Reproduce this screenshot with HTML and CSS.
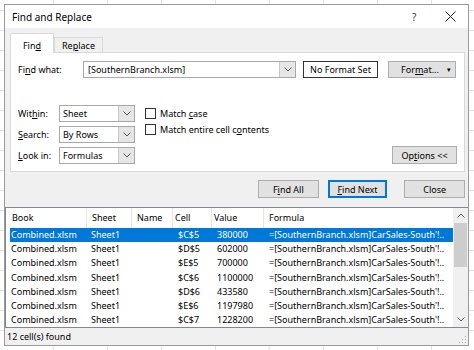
FILE: index.html
```html
<!DOCTYPE html>
<html lang="en">
<head>
	<meta charset="utf-8">
	<title>Find and Replace</title>
	<link rel="stylesheet" href="styles.css">
</head>
<body>
	<div class="dialog">
		<div class="titlebar">
			<span class="title">Find and Replace</span>
			<span class="help">?</span>
			<span class="close-x">
				<svg width="11" height="11" viewBox="0 0 11 11"><path d="M0.5 0.5 L10.5 10.5 M10.5 0.5 L0.5 10.5" stroke="#222" stroke-width="1" fill="none"/></svg>
			</span>
		</div>

		<div class="main">
			<div class="tabs">
				<div class="tab active"><span>Fin<u>d</u></span></div>
				<div class="tab"><span>Re<u>p</u>lace</span></div>
			</div>

			<div class="panel">
				<div class="find-row">
					<span class="find-label">Fi<u>n</u>d what:</span>
					<div class="combo">
						<span class="combo-text">[SouthernBranch.xlsm]</span>
						<span class="drop">
							<svg width="8" height="5" viewBox="0 0 8 5"><path d="M0.5 0.5 L4 4 L7.5 0.5" stroke="#555" fill="none"/></svg>
						</span>
					</div>
					<div class="no-format">No Format Set</div>
					<div class="btn format-btn"><span>For<u>m</u>at...</span><span class="caret">&#9662;</span></div>
				</div>

				<div class="opts">
					<div class="selects">
						<div class="sel-row">
							<span class="label">Wit<u>h</u>in:</span>
							<div class="select">
								<span class="select-text">Sheet</span>
								<span class="drop">
									<svg width="8" height="5" viewBox="0 0 8 5"><path d="M0.5 0.5 L4 4 L7.5 0.5" stroke="#555" fill="none"/></svg>
								</span>
							</div>
						</div>
						<div class="sel-row">
							<span class="label"><u>S</u>earch:</span>
							<div class="select">
								<span class="select-text">By Rows</span>
								<span class="drop">
									<svg width="8" height="5" viewBox="0 0 8 5"><path d="M0.5 0.5 L4 4 L7.5 0.5" stroke="#555" fill="none"/></svg>
								</span>
							</div>
						</div>
						<div class="sel-row">
							<span class="label"><u>L</u>ook in:</span>
							<div class="select">
								<span class="select-text">Formulas</span>
								<span class="drop">
									<svg width="8" height="5" viewBox="0 0 8 5"><path d="M0.5 0.5 L4 4 L7.5 0.5" stroke="#555" fill="none"/></svg>
								</span>
							</div>
						</div>
					</div>

					<div class="checks">
						<div class="check-row"><span class="box"></span><span>Match <u>c</u>ase</span></div>
						<div class="check-row"><span class="box"></span><span>Match entire cell c<u>o</u>ntents</span></div>
					</div>

					<div class="btn options-btn"><span>Op<u>t</u>ions &lt;&lt;</span></div>
				</div>
			</div>

			<div class="actions">
				<div class="btn act"><span>F<u>i</u>nd All</span></div>
				<div class="btn act default"><span><u>F</u>ind Next</span></div>
				<div class="btn act close-btn">Close</div>
			</div>
		</div>

		<div class="results">
			<div class="table">
				<div class="grid head">
					<span class="c1">Book</span>
					<span class="c2">Sheet</span>
					<span class="c3">Name</span>
					<span class="c4">Cell</span>
					<span class="c5">Value</span>
					<span class="c6">Formula</span>
				</div>
				<div class="grid row selected">
					<span class="c1">Combined.xlsm</span><span class="c2">Sheet1</span><span class="c3"></span><span class="c4">$C$5</span><span class="c5">380000</span><span class="c6">=[SouthernBranch.xlsm]CarSales-South'!..</span>
				</div>
				<div class="grid row">
					<span class="c1">Combined.xlsm</span><span class="c2">Sheet1</span><span class="c3"></span><span class="c4">$D$5</span><span class="c5">602000</span><span class="c6">=[SouthernBranch.xlsm]CarSales-South'!..</span>
				</div>
				<div class="grid row">
					<span class="c1">Combined.xlsm</span><span class="c2">Sheet1</span><span class="c3"></span><span class="c4">$E$5</span><span class="c5">700000</span><span class="c6">=[SouthernBranch.xlsm]CarSales-South'!..</span>
				</div>
				<div class="grid row">
					<span class="c1">Combined.xlsm</span><span class="c2">Sheet1</span><span class="c3"></span><span class="c4">$C$6</span><span class="c5">1100000</span><span class="c6">=[SouthernBranch.xlsm]CarSales-South'!..</span>
				</div>
				<div class="grid row">
					<span class="c1">Combined.xlsm</span><span class="c2">Sheet1</span><span class="c3"></span><span class="c4">$D$6</span><span class="c5">433580</span><span class="c6">=[SouthernBranch.xlsm]CarSales-South'!..</span>
				</div>
				<div class="grid row">
					<span class="c1">Combined.xlsm</span><span class="c2">Sheet1</span><span class="c3"></span><span class="c4">$E$6</span><span class="c5">1197980</span><span class="c6">=[SouthernBranch.xlsm]CarSales-South'!..</span>
				</div>
				<div class="grid row">
					<span class="c1">Combined.xlsm</span><span class="c2">Sheet1</span><span class="c3"></span><span class="c4">$C$7</span><span class="c5">1228200</span><span class="c6">=[SouthernBranch.xlsm]CarSales-South'!..</span>
				</div>
			</div>
			<div class="scrollbar">
				<span class="arrow">
					<svg width="8" height="5" viewBox="0 0 8 5"><path d="M0.5 4.5 L4 1 L7.5 4.5" stroke="#555" fill="none"/></svg>
				</span>
				<div class="track"><div class="thumb"></div></div>
				<span class="arrow">
					<svg width="8" height="5" viewBox="0 0 8 5"><path d="M0.5 0.5 L4 4 L7.5 0.5" stroke="#555" fill="none"/></svg>
				</span>
			</div>
		</div>

		<div class="status">
			<span>12 cell(s) found</span>
			<svg class="grip" width="8" height="8" viewBox="0 0 8 8">
				<rect x="6" y="0" width="1" height="1" fill="#aaa"/>
				<rect x="3" y="3" width="1" height="1" fill="#aaa"/>
				<rect x="6" y="3" width="1" height="1" fill="#aaa"/>
				<rect x="0" y="6" width="1" height="1" fill="#aaa"/>
				<rect x="3" y="6" width="1" height="1" fill="#aaa"/>
				<rect x="6" y="6" width="1" height="1" fill="#aaa"/>
			</svg>
		</div>
	</div>
</body>
</html>
```

FILE: styles.css
```css
html {
	height: 100%;
}

body {
	margin: 0;
	padding: 0;
	width: 474px;
	height: 350px;
	overflow: hidden;
	background-color: #ffffff;
	background-image:
		linear-gradient(to right, #e2e2e2 1px, transparent 1px),
		linear-gradient(to bottom, #e2e2e2 1px, transparent 1px);
	background-size: 54px 20px;
	background-position: -1px 10px;
	color: #000000;
	font-family: "Noto Sans", "Open Sans", sans-serif;
	font-size: 9px;
	white-space: nowrap;
}

u {
	text-decoration: underline;
	text-underline-offset: 1px;
}

.dialog {
	margin: 4px 0 0 4px;
	width: 463px;
	height: 340px;
	border: 1px solid #9a9a9a;
	background: #f0f0f0;
	display: flex;
	flex-direction: column;
}

.titlebar {
	height: 23px;
	background: #ffffff;
	display: flex;
	align-items: center;
	padding-left: 7px;
	font-size: 10px;
}

.title {
	flex: 1;
}

.help {
	width: 10px;
	margin-right: 23px;
	color: #333;
}

.close-x {
	display: flex;
	margin-right: 12px;
}

.main {
	padding: 5px 3px 0 5px;
}

.tabs {
	display: flex;
	align-items: flex-end;
	height: 19px;
}

.tab {
	height: 15px;
	padding: 0 7px 0 7px;
	border: 1px solid #d9d9d9;
	border-bottom: none;
	background: #f0f0f0;
	display: flex;
	align-items: center;
	box-sizing: border-box;
}

.tab.active {
	height: 20px;
	width: 44px;
	justify-content: center;
	background: #ffffff;
	margin-bottom: -1px;
	position: relative;
	z-index: 1;
	padding-top: 4px;
}

.panel {
	background: #ffffff;
	border: 1px solid #d9d9d9;
	padding: 8px 7px 0 7px;
	box-sizing: border-box;
	height: 120px;
}

.find-row {
	display: flex;
	align-items: center;
	height: 17px;
}

.find-label {
	width: 65px;
	flex-shrink: 0;
}

.combo {
	width: 213px;
	height: 17px;
	border: 1px solid #a8a8a8;
	box-sizing: border-box;
	display: flex;
	align-items: center;
}

.combo-text {
	flex: 1;
	padding-left: 4px;
}

.drop {
	width: 15px;
	height: 15px;
	background: #e6e6e6;
	border-left: 1px solid #c8c8c8;
	display: flex;
	align-items: center;
	justify-content: center;
}

.no-format {
	margin-left: 7px;
	width: 75px;
	height: 17px;
	border: 1px solid #333;
	box-sizing: border-box;
	display: flex;
	align-items: center;
	justify-content: center;
}

.btn {
	height: 18px;
	border: 1px solid #adadad;
	background: #e1e1e1;
	box-sizing: border-box;
	display: flex;
	align-items: center;
	justify-content: center;
}

.format-btn {
	margin-left: 10px;
	width: 68px;
	height: 17px;
	padding-left: 8px;
}

.caret {
	margin-left: 8px;
	font-size: 7px;
}

.opts {
	display: flex;
	margin-top: 27px;
}

.selects {
	display: flex;
	flex-direction: column;
	gap: 4px;
}

.sel-row {
	display: flex;
	align-items: center;
	height: 17px;
}

.label {
	width: 41px;
}

.select {
	width: 76px;
	height: 17px;
	border: 1px solid #a8a8a8;
	box-sizing: border-box;
	display: flex;
	align-items: center;
}

.select-text {
	flex: 1;
	padding-left: 3px;
}

.checks {
	margin-left: 10px;
	display: flex;
	flex-direction: column;
}

.check-row {
	display: flex;
	align-items: center;
	height: 16px;
}

.box {
	width: 11px;
	height: 11px;
	border: 1px solid #333;
	box-sizing: border-box;
	background: #ffffff;
	margin-right: 4px;
}

.options-btn {
	margin-left: auto;
	align-self: flex-end;
	width: 65px;
}

.actions {
	display: flex;
	margin-top: 8px;
	padding-left: 248px;
}

.act {
	width: 62px;
}

.default {
	margin-left: 9px;
	width: 61px;
	border: 1px solid #0078d7;
	box-shadow: inset 0 0 0 1px #0078d7;
}

.close-btn {
	margin-left: 17px;
}

.results {
	margin-top: 9px;
	height: 121px;
	border: 1px solid #828790;
	border-right: none;
	box-sizing: border-box;
	background: #ffffff;
	display: flex;
}

.table {
	flex: 1;
	padding-left: 4px;
	overflow: hidden;
}

.grid {
	display: grid;
	grid-template-columns: 76px 45px 41px 39px 52px 1fr;
}

.grid span {
	overflow: hidden;
}

.head {
	height: 20px;
	align-items: center;
	margin-left: -4px;
	padding-left: 4px;
}

.head span {
	height: 20px;
	line-height: 20px;
	border-left: 1px solid #e5e5e5;
	padding-left: 5px;
}

.head .c1 {
	border-left: none;
	padding-left: 2px;
}

.head .c4,
.head .c5 {
	padding-left: 2px;
}

.row {
	height: 14.2px;
	line-height: 14.2px;
}

.row span {
	padding-left: 5px;
}

.row .c1 {
	padding-left: 1px;
}

.row .c4,
.row .c5,
.row .c6 {
	padding-left: 6px;
}

.row.selected {
	background: #0078d7;
	color: #ffffff;
}

.scrollbar {
	width: 15px;
	background: #f0f0f0;
	display: flex;
	flex-direction: column;
}

.arrow {
	height: 15px;
	display: flex;
	align-items: center;
	justify-content: center;
}

.track {
	flex: 1;
	padding: 0 1px;
}

.thumb {
	height: 44px;
	background: #cdcdcd;
}

.status {
	flex: 1;
	display: flex;
	align-items: center;
	padding-left: 2px;
	position: relative;
}

.grip {
	position: absolute;
	right: 1px;
	bottom: 1px;
}
```
